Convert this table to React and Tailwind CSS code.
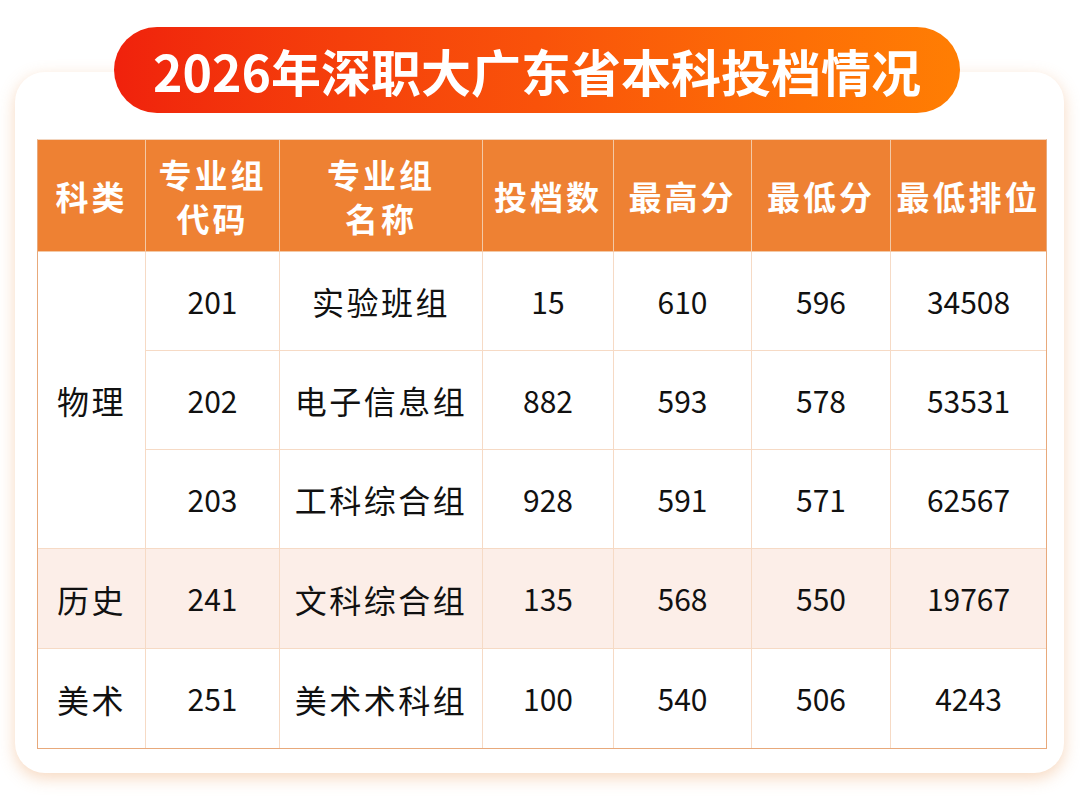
import React from "react";

const font = { fontFamily: '"Noto Sans CJK SC", "Noto Sans", sans-serif' };

function H({ children, last }) {
  return (
    <div
      className={
        "flex flex-col items-center justify-center bg-[#EE8133] text-white font-bold text-[33px] leading-[44px] tracking-[3px] border-b border-[#F3C9A6] " +
        (last ? "" : "border-r")
      }
    >
      {children}
    </div>
  );
}

function C({ children, last, bottom, bg, span, num }) {
  return (
    <div
      className={
        "flex items-center justify-center text-[#111] border-[#F6DAC5] " +
        (num ? "text-[30px] tracking-[0px] " : "text-[32px] tracking-[2.5px] ") +
        (last ? "" : "border-r ") +
        (bottom ? "" : "border-b ") +
        (bg ? "bg-[#FCEEE8] " : "bg-white ") +
        (span ? "row-span-3" : "")
      }
    >
      {children}
    </div>
  );
}

const rows = [
  ["201", "实验班组", "15", "610", "596", "34508"],
  ["202", "电子信息组", "882", "593", "578", "53531"],
  ["203", "工科综合组", "928", "591", "571", "62567"],
];

export default function App() {
  return (
    <div className="w-[1080px] h-[812px] bg-white pt-[27px]" style={font}>
      <div className="relative z-10 ml-[114px] w-[846px] h-[86px] rounded-full bg-gradient-to-r from-[#F0210C] via-[#F9520A] to-[#FF7E03] flex items-center justify-center">
        <span className="text-white font-bold text-[50px] leading-none">
          2026年深职大广东省本科投档情况
        </span>
      </div>
      <div className="-mt-[41px] ml-[15px] w-[1049px] h-[701px] rounded-[30px] bg-white shadow-[0_5px_16px_rgba(238,168,112,0.45)] pt-[67px] pl-[22px]">
        <div className="w-[1010px] border border-[#E8A97B] border-t-[#F2D5BF] grid grid-cols-[108px_134px_203px_131px_138px_139px_155px] grid-rows-[112px_99px_99px_99px_100px_99px]">
          <H>科类</H>
          <H>
            <span>专业组</span>
            <span>代码</span>
          </H>
          <H>
            <span>专业组</span>
            <span>名称</span>
          </H>
          <H>投档数</H>
          <H>最高分</H>
          <H>最低分</H>
          <H last>最低排位</H>

          <C span>物理</C>
          {rows.map((r, i) => (
            <React.Fragment key={i}>
              <C num>{r[0]}</C>
              <C>{r[1]}</C>
              <C num>{r[2]}</C>
              <C num>{r[3]}</C>
              <C num>{r[4]}</C>
              <C num last>{r[5]}</C>
            </React.Fragment>
          ))}

          <C bg>历史</C>
          <C bg num>241</C>
          <C bg>文科综合组</C>
          <C bg num>135</C>
          <C bg num>568</C>
          <C bg num>550</C>
          <C bg num last>19767</C>

          <C bottom>美术</C>
          <C bottom num>251</C>
          <C bottom>美术术科组</C>
          <C bottom num>100</C>
          <C bottom num>540</C>
          <C bottom num>506</C>
          <C bottom num last>4243</C>
        </div>
      </div>
    </div>
  );
}
